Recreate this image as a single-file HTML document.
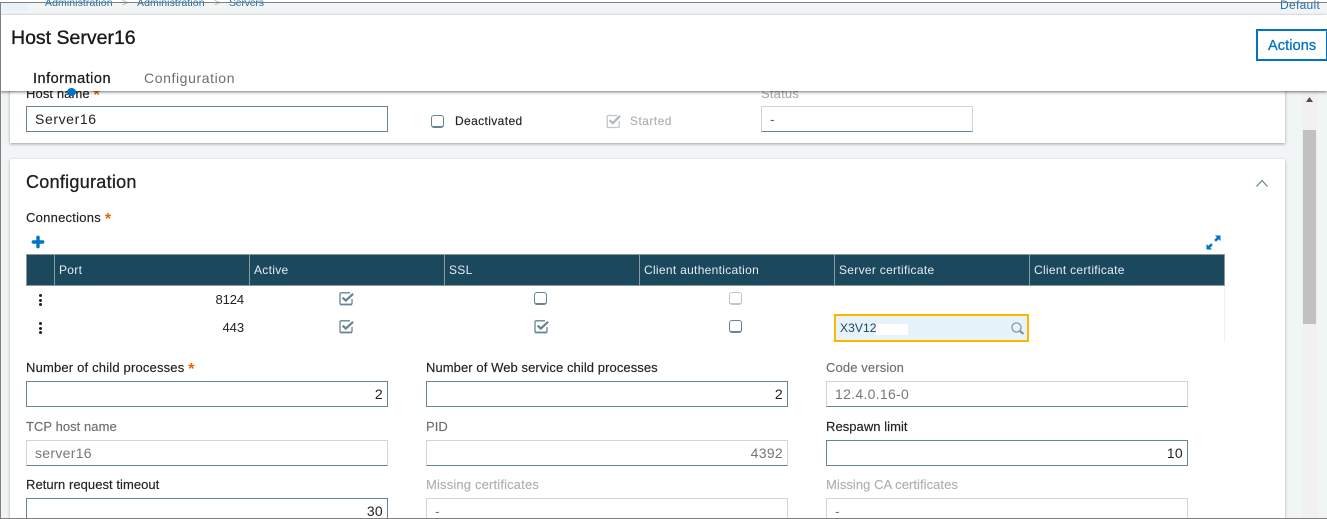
<!DOCTYPE html>
<html lang="en"><head><meta charset="utf-8"><title>Host Server16</title>
<style>
html,body{margin:0;padding:0;width:1327px;height:519px;overflow:hidden;background:#f2f5f6}
body{position:relative;font-family:"Liberation Sans",sans-serif;color:#1a1a1a}
.a{position:absolute;box-sizing:border-box}
.t{position:absolute;white-space:nowrap;font-size:13px;line-height:16px}
.l{position:absolute;white-space:nowrap;font-size:13px;line-height:16px;color:#222;-webkit-text-stroke:.15px currentColor}
.g{color:#6f6f6f}.lg{color:#b0b0b0}
.i{position:absolute;box-sizing:border-box;height:26px;width:362px;border:1px solid #668592;background:#fff;font-size:14px;line-height:24px;padding:0 4px 0 8px;color:#222;letter-spacing:.3px;white-space:nowrap}
.d{border-color:#ccd6db;border-bottom-color:#668592;color:#777}
.e{border-color:#ccd6db;border-bottom-color:#ccd6db;color:#777}
.r{text-align:right}
.s{color:#e96400;font-weight:700;font-size:16px;line-height:10px;vertical-align:-2px;-webkit-text-stroke:0}
.th{position:absolute;top:255px;height:30px;line-height:30px;font-size:12px;color:#e6ecef;letter-spacing:.3px;white-space:nowrap}
.sep{position:absolute;top:254px;height:32px;width:1px;background:#8a9a9f}
svg{position:absolute;overflow:visible}
.dots{position:absolute;width:3px;height:3px;background:#222;border-radius:50%;left:38.5px}
</style></head><body>

<div class="a" style="left:0;top:0;width:1327px;height:3px;background:#fff"></div>
<div class="a" style="left:3px;top:3px;width:26px;height:8px;background:#e6f3fa"></div>
<div class="t" style="left:45px;top:-5px;font-size:10.5px;color:#1d6fa8;letter-spacing:.08px">Administration</div>
<div class="t" style="left:137px;top:-5px;font-size:10.5px;color:#1d6fa8;letter-spacing:.08px">Administration</div>
<div class="t" style="left:229px;top:-5px;font-size:10.5px;color:#1d6fa8;letter-spacing:-.2px">Servers</div>
<div class="t" style="left:122px;top:-5px;font-size:10.5px;color:#aaa">&gt;</div>
<div class="t" style="left:214px;top:-5px;font-size:10.5px;color:#aaa">&gt;</div>
<div class="t" style="left:1280px;top:-3px;font-size:12px;color:#1d6fa8;letter-spacing:.3px">Default</div>

<!-- cards -->
<div class="a" style="left:10px;top:80px;width:1275px;height:63px;background:#fff;box-shadow:0 1px 3px rgba(0,0,0,.35)"></div>
<div class="l" style="left:26px;top:86px;letter-spacing:.1px">Host name <span class="s">*</span></div>
<div class="i" style="left:26px;top:106px;letter-spacing:.6px">Server16</div>
<div class="a" style="left:431px;top:115px;width:13px;height:13px;border:1px solid #668592;border-bottom-width:2px;border-radius:3px"></div>
<div class="l" style="left:455px;top:113px;font-size:12px;letter-spacing:.38px">Deactivated</div>
<svg style="left:606px;top:114px" width="16" height="15" viewBox="0 0 16 15"><path d="M11 1.5H2.2a1 1 0 0 0-1 1v10a1 1 0 0 0 1 1h10a1 1 0 0 0 1-1V7" fill="none" stroke="#bcc8cd" stroke-width="1.3"/><path d="M3.6 6.2l3.2 3 7.2-7.4" fill="none" stroke="#a9b8be" stroke-width="2.2"/></svg>
<div class="l lg" style="left:630px;top:113px;font-size:12px;letter-spacing:.45px">Started</div>
<div class="l lg" style="left:761px;top:86px;letter-spacing:.2px">Status</div>
<div class="i d" style="left:761px;top:106px;width:212px;color:#666">-</div>

<div class="a" style="left:10px;top:159px;width:1275px;height:370px;background:#fff;box-shadow:0 1px 3px rgba(0,0,0,.3)"></div>
<div class="t" style="left:26px;top:171px;font-size:18px;line-height:22px;color:#1f1f1f;letter-spacing:.28px;-webkit-text-stroke:.3px #1f1f1f">Configuration</div>
<svg style="left:1256px;top:179px" width="12" height="8"><path d="M.5 7.5L6 1.5l5.500 6" fill="none" stroke="#668592" stroke-width="1.200"/></svg>
<div class="l" style="left:26px;top:210px;letter-spacing:.25px">Connections <span class="s">*</span></div>
<svg style="left:31.500px;top:236px" width="12" height="12"><path d="M6 .5v11M.5 6h11" stroke="#0073c2" stroke-width="4" stroke-linecap="round" transform="translate(6 6) scale(.85) translate(-6 -6)"/></svg>
<svg style="left:1206px;top:235px" width="15" height="15" viewBox="0 0 15 15" fill="#0073c2"><path d="M9 .5h5.500V6L12.600 4.200 10 6.800 8.200 5l2.600-2.600zM0.500 14.500V9l1.900 1.900L5 8.300 6.800 10l-2.600 2.700 1.800 1.800z"/></svg>

<!-- table -->
<div class="a" style="left:26px;top:254px;width:1199px;height:32px;background:#1b485d;border-top:1px solid #8a9a9f;border-bottom:1px solid #8a9a9f"></div>
<div class="sep" style="left:26px"></div><div class="sep" style="left:54px"></div><div class="sep" style="left:249px"></div><div class="sep" style="left:444px"></div><div class="sep" style="left:639px"></div><div class="sep" style="left:834px"></div><div class="sep" style="left:1029px"></div><div class="sep" style="left:1224px"></div>
<div class="th" style="left:59px">Port</div>
<div class="th" style="left:254px">Active</div>
<div class="th" style="left:449px">SSL</div>
<div class="th" style="left:644px">Client authentication</div>
<div class="th" style="left:839px">Server certificate</div>
<div class="th" style="left:1034px">Client certificate</div>
<div class="a" style="left:1224px;top:286px;width:1px;height:56px;background:#eef1f2"></div>

<div class="dots" style="top:294px"></div><div class="dots" style="top:299px"></div><div class="dots" style="top:303px"></div>
<div class="dots" style="top:322px"></div><div class="dots" style="top:327px"></div><div class="dots" style="top:331px"></div>
<div class="t" style="left:180px;width:64px;top:292px;text-align:right;letter-spacing:-.1px;color:#222">8124</div>
<div class="t" style="left:180px;width:64px;top:320px;text-align:right;letter-spacing:-.05px;color:#222">443</div>

<svg style="left:339px;top:292px" width="16" height="14" viewBox="0 0 16 14"><path d="M11 .8H2a1 1 0 0 0-1 1v9.500a1 1 0 0 0 1 1h10a1 1 0 0 0 1-1V7" fill="none" stroke="#668592" stroke-width="1.300"/><path d="M1 12.600h12" stroke="#668592" stroke-width="1.500"/><path d="M3.600 5.600l3.200 3 7.300-6.800" fill="none" stroke="#668592" stroke-width="2.200"/></svg>
<svg style="left:339px;top:320px" width="16" height="14" viewBox="0 0 16 14"><path d="M11 .8H2a1 1 0 0 0-1 1v9.500a1 1 0 0 0 1 1h10a1 1 0 0 0 1-1V7" fill="none" stroke="#668592" stroke-width="1.300"/><path d="M1 12.600h12" stroke="#668592" stroke-width="1.500"/><path d="M3.600 5.600l3.200 3 7.300-6.800" fill="none" stroke="#668592" stroke-width="2.200"/></svg>
<svg style="left:534px;top:320px" width="16" height="14" viewBox="0 0 16 14"><path d="M11 .8H2a1 1 0 0 0-1 1v9.500a1 1 0 0 0 1 1h10a1 1 0 0 0 1-1V7" fill="none" stroke="#668592" stroke-width="1.300"/><path d="M1 12.600h12" stroke="#668592" stroke-width="1.500"/><path d="M3.600 5.600l3.200 3 7.300-6.800" fill="none" stroke="#668592" stroke-width="2.200"/></svg>
<div class="a" style="left:534px;top:292px;width:13px;height:13px;border:1px solid #668592;border-bottom-width:2px;border-radius:3px"></div>
<div class="a" style="left:729px;top:292px;width:13px;height:13px;border:1px solid #bcc8cd;border-bottom-width:2px;border-radius:3px"></div>
<div class="a" style="left:729px;top:320px;width:13px;height:13px;border:1px solid #668592;border-bottom-width:2px;border-radius:3px"></div>

<div class="a" style="left:834px;top:314px;width:195px;height:28px;background:#e6f3fa;border:2.500px solid #ffb500"></div>
<div class="t" style="left:840px;top:320px;font-size:12px;color:#1b485d;letter-spacing:.1px">X3V12</div>
<div class="a" style="left:876px;top:324px;width:32px;height:11px;background:#fff"></div>
<svg style="left:1011px;top:322px" width="14" height="13" viewBox="0 0 14 13"><circle cx="5.500" cy="5.500" r="4.600" fill="none" stroke="#8b9a9f" stroke-width="1.300"/><path d="M9 9l3.500 3" stroke="#7f8d92" stroke-width="2"/></svg>

<!-- form rows -->
<div class="l" style="left:26px;top:360px;letter-spacing:.18px">Number of child processes <span class="s">*</span></div>
<div class="i r" style="left:26px;top:381px">2</div>
<div class="l" style="left:426px;top:360px;letter-spacing:.08px">Number of Web service child processes</div>
<div class="i r" style="left:426px;top:381px">2</div>
<div class="l g" style="left:826px;top:360px;letter-spacing:.12px">Code version</div>
<div class="i d" style="left:826px;top:381px">12.4.0.16-0</div>

<div class="l g" style="left:26px;top:419px;letter-spacing:.05px">TCP host name</div>
<div class="i d" style="left:26px;top:440px">server16</div>
<div class="l g" style="left:426px;top:419px;letter-spacing:.05px">PID</div>
<div class="i d r" style="left:426px;top:440px">4392</div>
<div class="l" style="left:826px;top:419px;letter-spacing:.05px">Respawn limit</div>
<div class="i r" style="left:826px;top:440px">10</div>

<div class="l" style="left:26px;top:477px;letter-spacing:.05px">Return request timeout</div>
<div class="i r" style="left:26px;top:498px">30</div>
<div class="l lg" style="left:426px;top:477px;letter-spacing:.16px">Missing certificates</div>
<div class="i e" style="left:426px;top:498px">-</div>
<div class="l lg" style="left:826px;top:477px;letter-spacing:.05px">Missing CA certificates</div>
<div class="i e" style="left:826px;top:498px">-</div>

<!-- scrollbar -->
<div class="a" style="left:1302px;top:91px;width:16px;height:428px;background:#f1f1f1"></div>
<div class="a" style="left:1303px;top:130px;width:13px;height:194px;background:#c1c1c1"></div>
<svg style="left:1306px;top:97px" width="7" height="5"><path d="M3.500 0L7 5H0z" fill="#505050"/></svg>

<!-- sticky header -->
<div class="a" style="left:0;top:15px;width:1327px;height:76px;background:#fff;box-shadow:0 1px 3px rgba(0,0,0,.55)"></div>
<div class="t" style="left:11px;top:26px;font-size:19.500px;line-height:24px;color:#191919;-webkit-text-stroke:.35px #191919">Host Server16</div>
<div class="a" style="left:1256px;top:29px;width:72px;height:32px;border:2px solid #0073c2;background:#fff"></div>
<div class="t" style="left:1268px;top:37px;font-size:14.500px;line-height:18px;color:#0073c2;letter-spacing:.1px;-webkit-text-stroke:.3px #0073c2">Actions</div>
<div class="t" style="left:33px;top:71px;font-size:14.500px;color:#1a1a1a;letter-spacing:.5px;-webkit-text-stroke:.25px #1a1a1a">Information</div>
<div class="t" style="left:144px;top:70px;font-size:14px;color:#6f6f6f;letter-spacing:.6px">Configuration</div>
<div class="a" style="left:67px;top:88px;width:9px;height:8px;background:#0073c2;border-radius:50%"></div>

<!-- window frame -->
<div class="a" style="left:0;top:2px;width:1327px;height:1px;background:#808080"></div>
<div class="a" style="left:0;top:2px;width:1px;height:517px;background:#808080"></div>
<div class="a" style="left:0;top:517.500px;width:1327px;height:1.500px;background:#808080"></div>
</body></html>
